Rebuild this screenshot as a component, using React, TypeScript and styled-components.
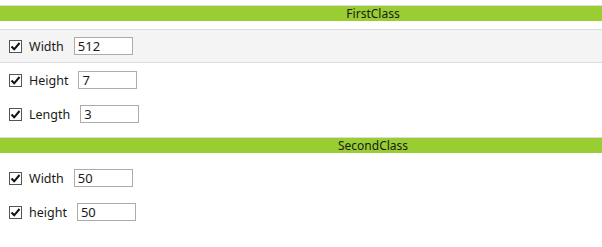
import React from 'react'
import styled, { createGlobalStyle } from 'styled-components'

const GlobalStyle = createGlobalStyle`
  body {
    margin: 0;
    background: #ffffff;
    font-family: 'Noto Sans', 'Liberation Sans', sans-serif;
    color: #1a1a1a;
  }
`

const Page = styled.div`
  width: 602px;
`

const Section = styled.section`
  margin-top: 6px;

  &:first-child {
    margin-top: 5px;
  }
`

const Header = styled.div`
  border-top: 1px solid #dcdcdc;
  height: 15px;
  background: #9acd32;
  padding-left: 144px;
  text-align: center;
  font-size: 12px;
  line-height: 15px;
  color: #1a1a1a;
  margin-bottom: 8px;
`

const Row = styled.div<{ $selected?: boolean }>`
  box-sizing: border-box;
  height: 34px;
  display: flex;
  align-items: center;
  padding-left: 9px;
  background: ${(p) => (p.$selected ? '#f4f4f4' : 'transparent')};
  border-top: 1px solid ${(p) => (p.$selected ? '#dcdcdc' : 'transparent')};
  border-bottom: 1px solid ${(p) => (p.$selected ? '#dcdcdc' : 'transparent')};
`

const Box = styled.span`
  box-sizing: border-box;
  width: 13px;
  height: 13px;
  border: 1px solid #555;
  background: #fff;
  display: flex;
  align-items: center;
  justify-content: center;
  margin-right: 7px;
`

const Label = styled.span`
  font-size: 12.5px;
  margin-right: 10px;
`

const Field = styled.input`
  box-sizing: border-box;
  width: 59px;
  height: 18px;
  border: 1px solid #ababab;
  padding: 0 0 0 3px;
  font-family: 'Noto Sans', 'Liberation Sans', sans-serif;
  font-size: 13px;
  color: #1a1a1a;
  background: #fff;
  outline: none;
`

const Check = () => (
  <Box>
    <svg width="11" height="11" viewBox="0 0 11 11">
      <path d="M1.5 5.5 L4.2 8.3 L9.5 2" fill="none" stroke="#111" strokeWidth="2" />
    </svg>
  </Box>
)

type Prop = { name: string; value: string; selected?: boolean }

const sections: { title: string; props: Prop[] }[] = [
  {
    title: 'FirstClass',
    props: [
      { name: 'Width', value: '512', selected: true },
      { name: 'Height', value: '7' },
      { name: 'Length', value: '3' },
    ],
  },
  {
    title: 'SecondClass',
    props: [
      { name: 'Width', value: '50' },
      { name: 'height', value: '50' },
    ],
  },
]

const App: React.FC = () => {
  return (
    <Page>
      <GlobalStyle />
      {sections.map((s) => (
        <Section key={s.title}>
          <Header>{s.title}</Header>
          {s.props.map((p) => (
            <Row key={p.name} $selected={p.selected}>
              <Check />
              <Label>{p.name}</Label>
              <Field defaultValue={p.value} />
            </Row>
          ))}
        </Section>
      ))}
    </Page>
  )
}

export default App
